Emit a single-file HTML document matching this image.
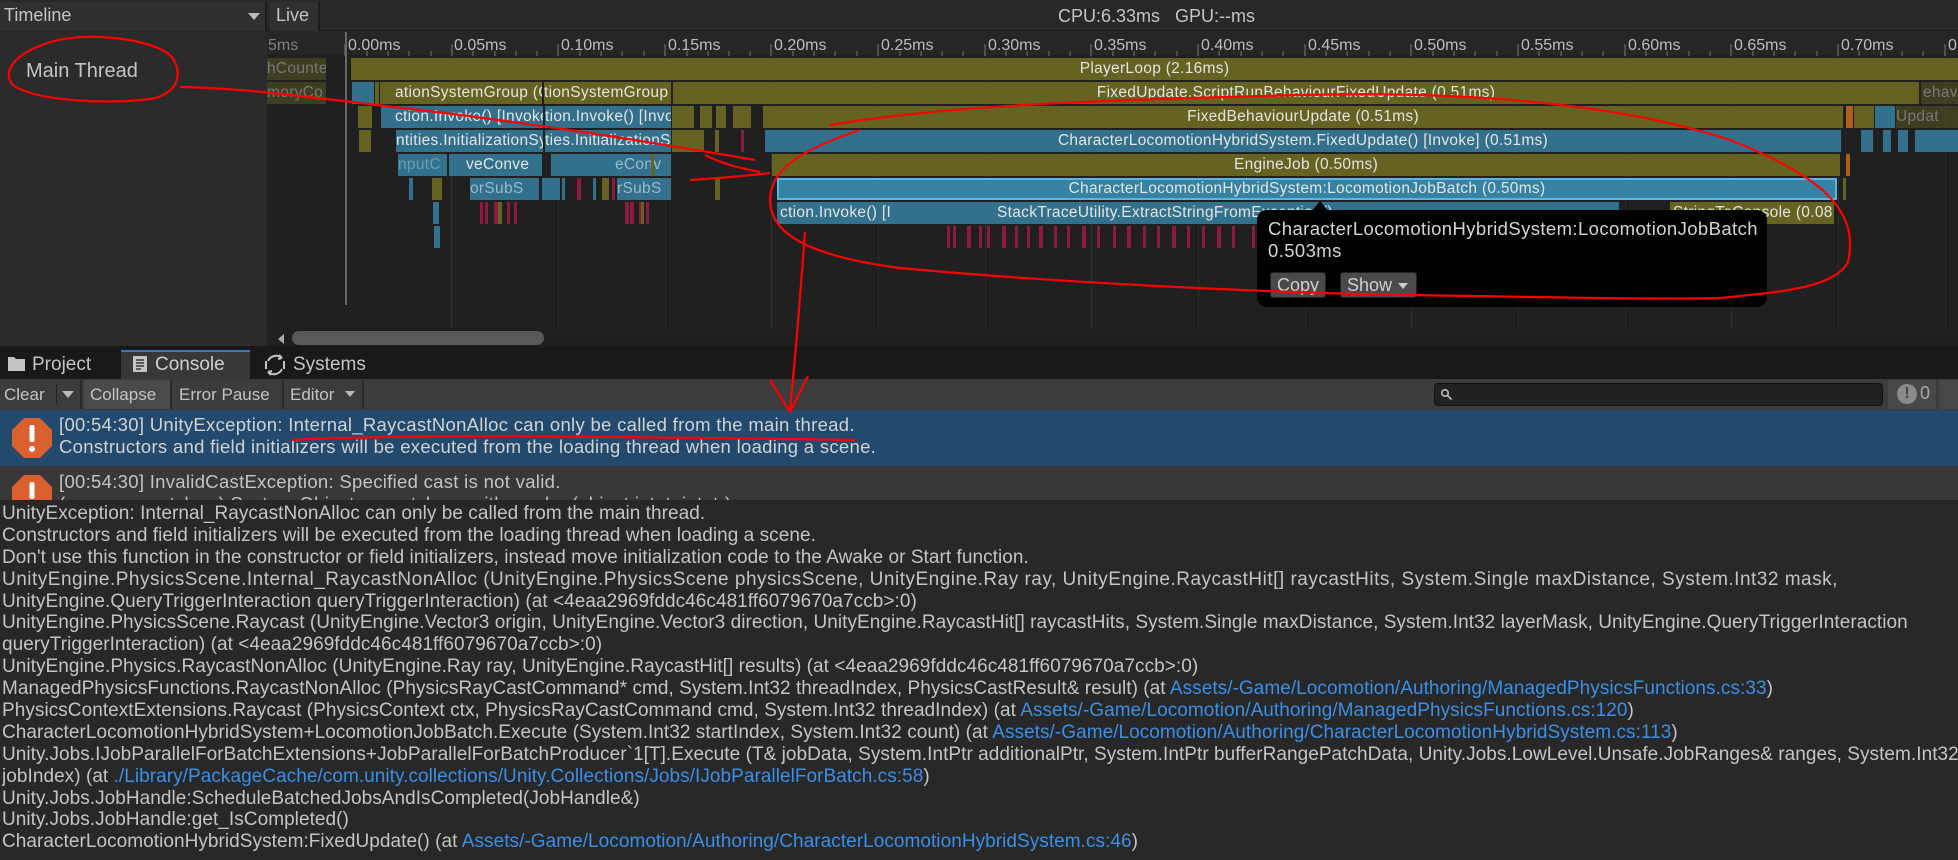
<!DOCTYPE html>
<html><head><meta charset="utf-8">
<style>
*{margin:0;padding:0;box-sizing:border-box}
body{width:1958px;height:860px;overflow:hidden;background:#282828;font-family:"Liberation Sans",sans-serif;color:#c4c4c4;position:relative}
.a{position:absolute}
.b{position:absolute;height:22px;font-size:15.5px;line-height:22px;white-space:nowrap;overflow:hidden;color:#e4e4e4;letter-spacing:0.3px}
.o{background:#646321}
.u{background:#32708b}
.m{background:#8b1c40}
.dim{opacity:.45}
.c{text-align:center}
.vl{position:absolute;top:55px;height:273px;width:1px;background:#2e2e2e}
.lbl{position:absolute;top:37px;font-size:16px;color:#bdbdbd}
.det{width:1956px;overflow:hidden}
.det div{height:21.9px;line-height:21.9px;font-size:19px;letter-spacing:0.05px;white-space:nowrap}
.lk{color:#3b8fe6}
.tb{position:absolute;top:380px;height:29px;line-height:29px;font-size:17px;color:#c4c4c4;padding-left:5px}
</style></head><body>
<div class="a" style="left:0;top:0;width:1958px;height:31px;background:#282828;border-bottom:1px solid #191919"></div>
<div class="a" style="left:0;top:2px;width:267px;height:29px;background:#303030;border-right:2px solid #1c1c1c"></div>
<div class="a" style="left:4px;top:5px;font-size:18px;color:#c4c4c4">Timeline</div>
<div class="a" style="left:248px;top:13px;width:0;height:0;border-left:6px solid transparent;border-right:6px solid transparent;border-top:7px solid #bbb"></div>
<div class="a" style="left:270px;top:2px;width:50px;height:29px;background:#303030;border-right:2px solid #1c1c1c"></div>
<div class="a" style="left:276px;top:5px;font-size:18px;color:#c4c4c4">Live</div>
<div class="a" style="left:1058px;top:6px;font-size:18px;color:#c4c4c4">CPU:6.33ms&nbsp;&nbsp;&nbsp;GPU:--ms</div>
<div class="a" style="left:0;top:32px;width:267px;height:314px;background:#2b2b2b"></div>
<div class="a" style="left:26px;top:60px;font-size:20px;color:#c4c4c4">Main Thread</div>
<div class="a" style="left:267px;top:32px;width:1691px;height:298px;background:#202020"></div>
<div class="a" style="left:267px;top:32px;width:1691px;height:23px;background:#262626"></div>
<div class="vl" style="left:345px;background:#666;width:2px;top:32px"></div>
<div class="vl" style="left:451px"></div><div class="vl" style="left:558px"></div><div class="vl" style="left:665px"></div><div class="vl" style="left:771px"></div><div class="vl" style="left:878px"></div><div class="vl" style="left:985px"></div><div class="vl" style="left:1091px"></div><div class="vl" style="left:1198px"></div><div class="vl" style="left:1305px"></div><div class="vl" style="left:1411px"></div><div class="vl" style="left:1518px"></div><div class="vl" style="left:1625px"></div><div class="vl" style="left:1731px"></div><div class="vl" style="left:1838px"></div><div class="vl" style="left:1945px"></div>
<div class="lbl" style="left:268px;opacity:.6">5ms</div>
<div class="lbl" style="left:348px">0.00ms</div><div class="lbl" style="left:454px">0.05ms</div><div class="lbl" style="left:561px">0.10ms</div><div class="lbl" style="left:668px">0.15ms</div><div class="lbl" style="left:774px">0.20ms</div><div class="lbl" style="left:881px">0.25ms</div><div class="lbl" style="left:988px">0.30ms</div><div class="lbl" style="left:1094px">0.35ms</div><div class="lbl" style="left:1201px">0.40ms</div><div class="lbl" style="left:1308px">0.45ms</div><div class="lbl" style="left:1414px">0.50ms</div><div class="lbl" style="left:1521px">0.55ms</div><div class="lbl" style="left:1628px">0.60ms</div><div class="lbl" style="left:1734px">0.65ms</div><div class="lbl" style="left:1841px">0.70ms</div><div class="lbl" style="left:1948px">0.75ms</div>
<svg class="a" style="left:267px;top:32px" width="1691" height="24">
<g stroke="#777" stroke-width="1">
<path d="M78 12v12M185 12v12M291 12v12M398 12v12M504 12v12M611 12v12M718 12v12M824 12v12M931 12v12M1038 12v12M1144 12v12M1251 12v12M1358 12v12M1464 12v12M1571 12v12M1678 12v12"/>
<path d="M100 19v5M121 19v5M142 19v5M164 19v5M206 19v5M228 19v5M249 19v5M270 19v5M313 19v5M334 19v5M355 19v5M377 19v5M420 19v5M441 19v5M462 19v5M483 19v5M526 19v5M547 19v5M568 19v5M590 19v5M633 19v5M654 19v5M675 19v5M696 19v5M739 19v5M760 19v5M782 19v5M803 19v5M846 19v5M867 19v5M888 19v5M910 19v5M952 19v5M974 19v5M995 19v5M1016 19v5M1059 19v5M1080 19v5M1102 19v5M1123 19v5M1166 19v5M1187 19v5M1208 19v5M1230 19v5M1272 19v5M1294 19v5M1315 19v5M1336 19v5M1379 19v5M1400 19v5M1422 19v5M1443 19v5M1486 19v5M1507 19v5M1528 19v5M1550 19v5M1592 19v5M1614 19v5M1635 19v5M1656 19v5"/>
</g></svg>
<div class="b o dim" style="left:267px;top:58px;width:59px">hCounte</div>
<div class="b o c" style="left:351px;top:58px;width:1607px;padding-left:0">PlayerLoop (2.16ms)</div>
<div class="b o dim" style="left:267px;top:82px;width:59px">moryCo</div>
<div class="b u" style="left:352px;top:82px;width:22px"></div>
<div class="b o" style="left:375px;top:82px;width:4px"></div>
<div class="b o" style="left:380px;top:82px;width:162px;padding-left:15px">ationSystemGroup (C</div>
<div class="b o" style="left:544px;top:82px;width:127px">tionSystemGroup (</div>
<div class="b o c" style="left:673px;top:82px;width:1246px">FixedUpdate.ScriptRunBehaviourFixedUpdate (0.51ms)</div>
<div class="b o dim" style="left:1921px;top:82px;width:37px;padding-left:2px">ehavio</div>
<div class="b o" style="left:358px;top:106px;width:14px"></div>
<div class="b u" style="left:381px;top:106px;width:162px;padding-left:14px">ction.Invoke() [Invoke</div>
<div class="b u" style="left:545px;top:106px;width:126px">tion.Invoke() [Invo</div>
<div class="b o" style="left:672px;top:106px;width:22px"></div>
<div class="b o" style="left:700px;top:106px;width:12px"></div>
<div class="b o" style="left:716px;top:106px;width:10px"></div>
<div class="b o" style="left:733px;top:106px;width:18px"></div>
<div class="b o c" style="left:763px;top:106px;width:1080px">FixedBehaviourUpdate (0.51ms)</div>
<div class="b" style="left:1846px;top:106px;width:7px;background:#b0601a"></div>
<div class="b o" style="left:1854px;top:106px;width:20px"></div>
<div class="b u" style="left:1875px;top:106px;width:20px"></div>
<div class="b o dim" style="left:1896px;top:106px;width:62px">Updat</div>
<div class="b o" style="left:359px;top:130px;width:12px"></div>
<div class="b u" style="left:396px;top:130px;width:147px;padding-left:0">ntities.InitializationSy</div>
<div class="b u" style="left:545px;top:130px;width:126px">ties.InitializationS</div>
<div class="b o" style="left:672px;top:130px;width:32px"></div>
<div class="b o" style="left:715px;top:130px;width:4px"></div>
<div class="b m" style="left:741px;top:130px;width:3px"></div>
<div class="b u c" style="left:765px;top:130px;width:1076px">CharacterLocomotionHybridSystem.FixedUpdate() [Invoke] (0.51ms)</div>
<div class="b u" style="left:1861px;top:130px;width:12px"></div>
<div class="b u" style="left:1883px;top:130px;width:8px"></div>
<div class="b u" style="left:1898px;top:130px;width:10px"></div>
<div class="b u" style="left:1915px;top:130px;width:43px"></div>
<div class="b u" style="left:398px;top:154px;width:49px;color:#6a9db5">nputC</div>
<div class="b u" style="left:449px;top:154px;width:93px;padding-left:17px">veConve</div>
<div class="b u" style="left:551px;top:154px;width:120px;padding-left:64px;color:#9bc">eConv</div>
<div class="b o" style="left:651px;top:154px;width:3px"></div>
<div class="b o c" style="left:772px;top:154px;width:1068px">EngineJob (0.50ms)</div>
<div class="b" style="left:1846px;top:154px;width:4px;background:#b0601a"></div>
<div class="b u" style="left:409px;top:178px;width:4px"></div>
<div class="b o" style="left:432px;top:178px;width:10px"></div>
<div class="b u" style="left:470px;top:178px;width:69px;color:#9bc">orSubS</div>
<div class="b u" style="left:542px;top:178px;width:18px"></div>
<div class="b u" style="left:562px;top:178px;width:3px"></div>
<div class="b m" style="left:577px;top:178px;width:4px"></div>
<div class="b u" style="left:593px;top:178px;width:3px"></div>
<div class="b o" style="left:602px;top:178px;width:7px"></div>
<div class="b m" style="left:612px;top:178px;width:3px"></div>
<div class="b u" style="left:617px;top:178px;width:54px;color:#9bc">rSubS</div>
<div class="b o" style="left:715px;top:178px;width:5px"></div>
<div class="b u c" style="left:777px;top:178px;width:1060px;background:#3682a3;border:2px solid #5ab6e0;line-height:18px">CharacterLocomotionHybridSystem:LocomotionJobBatch (0.50ms)</div>
<div class="b o" style="left:1843px;top:178px;width:3px"></div>
<div class="b u" style="left:433px;top:202px;width:6px"></div>
<div class="b u" style="left:434px;top:226px;width:6px"></div>
<div class="b u" style="left:777px;top:202px;width:842px;padding-left:3px">ction.Invoke() [I&nbsp;&nbsp;&nbsp;&nbsp;&nbsp;&nbsp;&nbsp;&nbsp;&nbsp;&nbsp;&nbsp;&nbsp;&nbsp;&nbsp;&nbsp;&nbsp;&nbsp;&nbsp;&nbsp;&nbsp;&nbsp;&nbsp;&nbsp;StackTraceUtility.ExtractStringFromException()</div>
<div class="b o" style="left:1670px;top:202px;width:164px;padding-left:3px">StringToConsole (0.08</div>
<svg class="a" style="left:267px;top:202px" width="1400" height="48">
<g fill="#8b1c40">
<rect x="213" y="0" width="3" height="22"/><rect x="218" y="0" width="3" height="22"/><rect x="227" y="0" width="4" height="22"/><rect x="240" y="0" width="3" height="22"/><rect x="247" y="0" width="3" height="22"/>
<rect x="358" y="0" width="4" height="22"/><rect x="363" y="0" width="4" height="22"/><rect x="372" y="0" width="3" height="22"/><rect x="379" y="0" width="3" height="22"/>
<rect x="680" y="24" width="3" height="22"/><rect x="686" y="24" width="3" height="22"/><rect x="700" y="24" width="4" height="22"/><rect x="712" y="24" width="3" height="22"/><rect x="720" y="24" width="3" height="22"/><rect x="735" y="24" width="4" height="22"/><rect x="748" y="24" width="3" height="22"/><rect x="760" y="24" width="3" height="22"/><rect x="772" y="24" width="4" height="22"/><rect x="787" y="24" width="3" height="22"/><rect x="800" y="24" width="3" height="22"/><rect x="815" y="24" width="4" height="22"/><rect x="830" y="24" width="3" height="22"/><rect x="846" y="24" width="3" height="22"/><rect x="860" y="24" width="4" height="22"/><rect x="876" y="24" width="3" height="22"/><rect x="890" y="24" width="3" height="22"/><rect x="905" y="24" width="4" height="22"/><rect x="920" y="24" width="3" height="22"/><rect x="935" y="24" width="3" height="22"/><rect x="950" y="24" width="4" height="22"/><rect x="965" y="24" width="3" height="22"/><rect x="985" y="24" width="3" height="22"/><rect x="995" y="24" width="8" height="22"/><rect x="1005" y="24" width="3" height="22"/><rect x="1010" y="24" width="3" height="22"/><rect x="1015" y="24" width="3" height="22"/><rect x="1020" y="24" width="3" height="22"/><rect x="1025" y="24" width="3" height="22"/>
</g>
<g fill="#646321"><rect x="231" y="0" width="4" height="22"/><rect x="374" y="0" width="3" height="22"/></g>
</svg>
<div class="a" style="left:267px;top:330px;width:1691px;height:16px;background:#1f1f1f"></div>
<div class="a" style="left:278px;top:334px;width:0;height:0;border-top:5px solid transparent;border-bottom:5px solid transparent;border-right:6px solid #aaa"></div>
<div class="a" style="left:292px;top:331px;width:252px;height:14px;background:#595959;border-radius:7px"></div>
<div class="a" style="left:0;top:346px;width:1958px;height:33px;background:#191919"></div>
<div class="a" style="left:121px;top:350px;width:129px;height:29px;background:#383838;border-top:2px solid #3a79bb"></div>
<svg class="a" style="left:8px;top:356px" width="18" height="16"><path d="M0 1h6l2 2h9v12H0z" fill="#c4c4c4"/></svg>
<div class="a" style="left:32px;top:354px;font-size:19px;color:#c4c4c4">Project</div>
<svg class="a" style="left:133px;top:356px" width="14" height="16"><rect x="0" y="0" width="14" height="16" fill="#c4c4c4"/><path d="M3 4h8M3 7h8M3 10h8M3 13h5" stroke="#383838" stroke-width="1.5"/></svg>
<div class="a" style="left:155px;top:354px;font-size:19px;color:#d0d0d0">Console</div>
<svg class="a" style="left:263px;top:352px" width="24" height="26" fill="none" stroke="#c4c4c4" stroke-width="2"><path d="M5 9A9 9 0 0 1 19 6M19 6l-3-3M19 6l-4 1"/><path d="M19 17A9 9 0 0 1 5 20M5 20l3 3M5 20l4-1"/><path d="M3 9v8M21 9v8"/></svg>
<div class="a" style="left:293px;top:354px;font-size:19px;color:#c4c4c4">Systems</div>
<div class="a" style="left:0;top:379px;width:1958px;height:31px;background:#3c3c3c"></div>
<div class="tb" style="left:0;width:48px;padding-left:4px">Clear</div>
<div class="a" style="left:56px;top:384px;width:1px;height:20px;background:#222"></div>
<div class="a" style="left:62px;top:391px;border-left:6px solid transparent;border-right:6px solid transparent;border-top:7px solid #bbb"></div>
<div class="a" style="left:80px;top:380px;width:2px;height:29px;background:#2a2a2a"></div>
<div class="tb" style="left:84px;width:86px;background:#4a4a4a;padding-left:6px">Collapse</div>
<div class="a" style="left:170px;top:380px;width:2px;height:29px;background:#2a2a2a"></div>
<div class="tb" style="left:174px;width:108px;padding-left:5px">Error Pause</div>
<div class="a" style="left:282px;top:380px;width:2px;height:29px;background:#2a2a2a"></div>
<div class="tb" style="left:286px;width:76px;padding-left:4px">Editor</div>
<div class="a" style="left:345px;top:391px;border-left:5px solid transparent;border-right:5px solid transparent;border-top:6px solid #bbb"></div>
<div class="a" style="left:362px;top:380px;width:2px;height:29px;background:#2a2a2a"></div>
<div class="a" style="left:1434px;top:383px;width:449px;height:23px;background:#212121;border:1px solid #111;border-radius:4px"></div>
<svg class="a" style="left:1440px;top:388px" width="14" height="14" fill="none" stroke="#bbb" stroke-width="1.6"><circle cx="5" cy="5" r="3.2"/><path d="M7.5 7.5l4 4"/></svg>
<div class="a" style="left:1888px;top:380px;width:48px;height:29px;background:#484848"></div>
<div class="a" style="left:1897px;top:384px;width:20px;height:20px;border-radius:50%;background:#8a8a8a;color:#484848;font-weight:bold;font-size:16px;text-align:center;line-height:20px">!</div>
<div class="a" style="left:1920px;top:383px;font-size:18px;color:#aaa">0</div>
<div class="a" style="left:1939px;top:380px;width:19px;height:29px;background:#484848"></div>
<div class="a" style="left:0;top:410px;width:1958px;height:56px;background:#23496d"></div>
<svg class="a" style="left:12px;top:418px" width="40" height="40"><polygon points="12,0 28,0 40,12 40,28 28,40 12,40 0,28 0,12" fill="#d9602f"/><rect x="17.5" y="7" width="5" height="17" rx="2" fill="#fff"/><circle cx="20" cy="31" r="3" fill="#fff"/></svg>
<div class="a" style="left:59px;top:414px;font-size:18.5px;letter-spacing:0.3px;line-height:22px;color:#d2d2d2;white-space:nowrap">[00:54:30] UnityException: Internal_RaycastNonAlloc can only be called from the main thread.<br>Constructors and field initializers will be executed from the loading thread when loading a scene.</div>
<div class="a" style="left:0;top:466px;width:1958px;height:34px;background:#383838;overflow:hidden">
<svg class="a" style="left:12px;top:9px" width="40" height="40"><polygon points="12,0 28,0 40,12 40,28 28,40 12,40 0,28 0,12" fill="#d9602f"/><rect x="17.5" y="7" width="5" height="17" rx="2" fill="#fff"/></svg>
<div class="a" style="left:59px;top:5px;font-size:18.5px;letter-spacing:0.3px;line-height:22px;color:#c4c4c4;white-space:nowrap">[00:54:30] InvalidCastException: Specified cast is not valid.<br>(wrapper castclass) System.Object:__castclass_with_cache (object,intptr,intptr)</div>
</div>
<div class="a" style="left:0;top:500px;width:1958px;height:360px;background:#282828"></div>
<div class="a det" style="left:2px;top:503px;color:#c4c4c4">
<div>UnityException: Internal_RaycastNonAlloc can only be called from the main thread.</div>
<div>Constructors and field initializers will be executed from the loading thread when loading a scene.</div>
<div>Don't use this function in the constructor or field initializers, instead move initialization code to the Awake or Start function.</div>
<div style="letter-spacing:0.5px">UnityEngine.PhysicsScene.Internal_RaycastNonAlloc (UnityEngine.PhysicsScene physicsScene, UnityEngine.Ray ray, UnityEngine.RaycastHit[] raycastHits, System.Single maxDistance, System.Int32 mask,</div>
<div>UnityEngine.QueryTriggerInteraction queryTriggerInteraction) (at &lt;4eaa2969fddc46c481ff6079670a7ccb&gt;:0)</div>
<div>UnityEngine.PhysicsScene.Raycast (UnityEngine.Vector3 origin, UnityEngine.Vector3 direction, UnityEngine.RaycastHit[] raycastHits, System.Single maxDistance, System.Int32 layerMask, UnityEngine.QueryTriggerInteraction</div>
<div>queryTriggerInteraction) (at &lt;4eaa2969fddc46c481ff6079670a7ccb&gt;:0)</div>
<div>UnityEngine.Physics.RaycastNonAlloc (UnityEngine.Ray ray, UnityEngine.RaycastHit[] results) (at &lt;4eaa2969fddc46c481ff6079670a7ccb&gt;:0)</div>
<div>ManagedPhysicsFunctions.RaycastNonAlloc (PhysicsRayCastCommand* cmd, System.Int32 threadIndex, PhysicsCastResult&amp; result) (at <span class="lk">Assets/-Game/Locomotion/Authoring/ManagedPhysicsFunctions.cs:33</span>)</div>
<div>PhysicsContextExtensions.Raycast (PhysicsContext ctx, PhysicsRayCastCommand cmd, System.Int32 threadIndex) (at <span class="lk">Assets/-Game/Locomotion/Authoring/ManagedPhysicsFunctions.cs:120</span>)</div>
<div>CharacterLocomotionHybridSystem+LocomotionJobBatch.Execute (System.Int32 startIndex, System.Int32 count) (at <span class="lk">Assets/-Game/Locomotion/Authoring/CharacterLocomotionHybridSystem.cs:113</span>)</div>
<div>Unity.Jobs.IJobParallelForBatchExtensions+JobParallelForBatchProducer`1[T].Execute (T&amp; jobData, System.IntPtr additionalPtr, System.IntPtr bufferRangePatchData, Unity.Jobs.LowLevel.Unsafe.JobRanges&amp; ranges, System.Int32</div>
<div>jobIndex) (at <span class="lk">./Library/PackageCache/com.unity.collections/Unity.Collections/Jobs/IJobParallelForBatch.cs:58</span>)</div>
<div>Unity.Jobs.JobHandle:ScheduleBatchedJobsAndIsCompleted(JobHandle&amp;)</div>
<div>Unity.Jobs.JobHandle:get_IsCompleted()</div>
<div>CharacterLocomotionHybridSystem:FixedUpdate() (at <span class="lk">Assets/-Game/Locomotion/Authoring/CharacterLocomotionHybridSystem.cs:46</span>)</div>
</div>
<div class="a" style="left:1311px;top:201px;width:0;height:0;border-left:9px solid transparent;border-right:9px solid transparent;border-bottom:11px solid #000"></div>
<div class="a" style="left:1257px;top:210px;width:510px;height:97px;background:#000;border-radius:10px"></div>
<div class="a" style="left:1268px;top:218px;font-size:18.5px;letter-spacing:0.4px;line-height:22px;color:#d4d4d4;white-space:nowrap">CharacterLocomotionHybridSystem:LocomotionJobBatch<br>0.503ms</div>
<div class="a" style="left:1270px;top:272px;width:56px;height:26px;background:#4a4a4a;border:1px solid #222;border-radius:3px;font-size:18px;color:#d0d0d0;text-align:center;line-height:24px">Copy</div>
<div class="a" style="left:1340px;top:272px;width:77px;height:26px;background:#4a4a4a;border:1px solid #222;border-radius:3px;font-size:18px;color:#d0d0d0;padding-left:6px;line-height:24px">Show</div>
<div class="a" style="left:1398px;top:283px;border-left:5px solid transparent;border-right:5px solid transparent;border-top:6px solid #ccc"></div>
<svg class="a" style="left:0;top:0" width="1958" height="860" fill="none" stroke="#ff0000" stroke-width="2.2">
<path d="M45 44C80 30 150 38 170 55C185 72 178 95 150 99C110 104 40 102 14 86C2 75 10 56 45 44Z"/>
<path d="M180 87C250 88 330 100 420 110C520 122 640 140 755 160"/>
<path d="M705 155C725 165 740 168 760 172M690 180C720 178 745 176 770 173"/>
<path d="M830 125C950 105 1100 100 1300 95C1500 90 1640 110 1730 140C1820 175 1860 210 1848 262C1835 288 1780 292 1720 298C1650 300 1500 296 1400 295C1250 292 1050 282 900 268C800 255 770 230 770 200C770 170 800 150 860 130"/>
<path d="M805 232C800 300 795 360 790 410M770 380L790 412L808 376"/>
<path d="M292 440C420 434 560 436 855 440"/>
</svg>
</body></html>
